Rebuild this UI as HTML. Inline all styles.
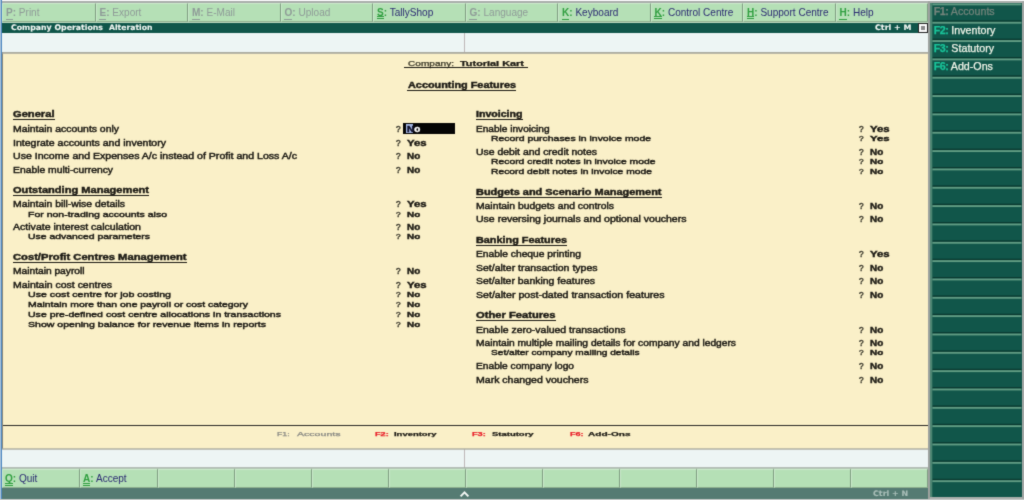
<!DOCTYPE html>
<html lang="en">
<head>
<meta charset="utf-8">
<title>Tally - Accounting Features</title>
<style>
html,body{margin:0;padding:0;}
body{width:1024px;height:500px;overflow:hidden;background:#d6dad8;font-family:"Liberation Sans",Arial,sans-serif;}
#app{filter:url(#soft);position:relative;width:1024px;height:500px;overflow:hidden;background:#a9aeab;}
#app div,#app span,#app i,#app b{box-sizing:border-box;}
.edge-top{position:absolute;left:0;top:0;width:1024px;height:1.3px;background:#fbfbfb;}
.edge-left-a{position:absolute;left:0;top:0;width:1px;height:500px;background:#a9c3da;}
.edge-left-b{position:absolute;left:1px;top:0;width:1.2px;height:500px;background:#4b86c0;}
.edge-bot{position:absolute;left:0;top:498.6px;width:1024px;height:1.4px;background:#c9cdcb;}
.edge-right{position:absolute;left:1021.7px;top:1.3px;width:2.3px;height:498px;background:#a4a8a6;}
/* top toolbar */
#tbar{position:absolute;left:2.4px;top:2.5px;width:926.1px;height:19.4px;display:flex;background:#7f9d82;}
#bbar{position:absolute;left:2.4px;top:468px;width:926.1px;height:20px;display:flex;background:#7f9d82;}
.btn{position:relative;flex:0 0 auto;height:100%;background:#b5e0b6;border-left:1.5px solid #cbeacb;border-top:1.4px solid #cbeacb;border-right:1.1px solid #7f9d82;border-bottom:1.1px solid #8fb08f;white-space:nowrap;overflow:hidden;}
.btn .lbl{position:absolute;left:2.6px;top:3.9px;font-size:10.05px;line-height:12px;color:#2b2a72;transform-origin:0 50%;}
.btn.off .lbl{color:#8e9a97;}
.btn .k{position:relative;display:inline-block;font-weight:bold;color:#2f9e3f;}
.btn.off .k{color:#8e9a97;}
.btn .c{color:#2f9e3f;font-weight:bold;}
.btn.off .c{color:#8e9a97;}
.btn .k:after{content:"";position:absolute;left:0;right:0;top:11.3px;height:1.1px;background:#2f9e3f;}
.btn.dbl .k:after{top:9.1px;height:3px;box-sizing:border-box;background:none;border-top:1px solid #2f9e3f;border-bottom:1px solid #2f9e3f;}
.btn.off .k:after{background:#8e9a97;}
#bbar .lbl{left:1.6px;font-size:10.05px;}
#tbar .btn{width:92.51px;}
#tbar .btn.first{width:93.51px;}
#bbar .btn{width:77.09px;}
#bbar .btn.first{width:78.09px;}
#bbar .btn{border-top-width:2px;}
#bbar .lbl{top:3.2px;}
#bbar .btn.dbl .k:after{top:10.1px;}
/* title bar */
#tline{position:absolute;left:2.4px;top:21.9px;width:925.7px;height:1px;background:#bcd8bd;}
#title{position:absolute;left:2.4px;top:22.8px;width:925.7px;height:10.1px;background:#10564a;}
#xbox{position:absolute;left:918px;top:23.2px;width:10.1px;height:9.6px;background:#fbfbfb;border:1px solid #222;}
#xbox i{position:absolute;left:2.2px;top:2.2px;width:3.8px;height:3.2px;background:#8a8a8a;}
/* light strips */
.strip{position:absolute;left:2.4px;width:925.7px;background:#edf5f4;}
#s1{top:32.9px;height:20.1px;}
#s2{top:449px;height:19px;}
.vline{position:absolute;left:461.8px;top:0;width:1px;height:100%;background:#beb7b7;}
.hline{position:absolute;left:2.4px;width:925.7px;height:1.1px;background:#a3a5a0;}
/* main yellow */
#main{position:absolute;left:2.4px;top:52px;width:925.7px;height:398px;background:#faf0c8;border-left:1.3px solid #8a8678;}
#sep{position:absolute;left:3.4px;top:424.6px;width:924.7px;height:1.3px;background:#2a2a26;}
/* bottom status */
#status{position:absolute;left:2.4px;top:488px;width:925.7px;height:10.6px;background:#557b73;}
/* right panel */
#gap{position:absolute;left:928.1px;top:1.3px;width:2.3px;height:497.3px;background:#9ea29f;}
#side{position:absolute;left:930.3px;top:2.6px;width:91.3px;height:494.6px;background:#11564a;overflow:hidden;}
#sidebg{position:absolute;left:0;top:0;display:block;}
.sb{position:absolute;left:2.3px;width:89px;height:18.34px;}
.sb span{position:absolute;left:1.1px;top:0;font-size:10.7px;line-height:12px;white-space:nowrap;color:#f3f6ea;transform-origin:0 50%;-webkit-text-stroke:0.25px currentColor;}
.sb b{color:#19c49a;font-weight:bold;letter-spacing:-0.45px;}
.sb.off span,.sb.off b{color:#74857c;}
/* content text */
#content{position:absolute;left:0;top:0;width:1024px;height:500px;}
.t{position:absolute;display:block;white-space:nowrap;line-height:12px;transform-origin:0 50%;font-family:"Liberation Sans",Arial,sans-serif;}

.t{-webkit-text-stroke:0.45px currentColor;}
.t.sub{-webkit-text-stroke:0.42px currentColor;}
.t.tiny{-webkit-text-stroke:0.25px currentColor;}
.t.dv{font-family:"DejaVu Sans","Liberation Sans",sans-serif;-webkit-text-stroke:0.12px currentColor;}
.ul{position:absolute;display:block;height:1.1px;background:#1c1a14;}
#field{position:absolute;left:403.4px;top:122.9px;width:51.9px;height:10.8px;background:#050505;}
#cur{position:absolute;left:405.6px;top:124.2px;width:7.6px;height:8.8px;background:#a4b6e2;}
.cn{color:#0c0c24;}
#caret{position:absolute;left:458.2px;top:488.7px;width:13px;height:9px;}

</style>
</head>
<body>
<svg width="0" height="0" style="position:absolute"><defs><filter id="soft" x="0" y="0" width="100%" height="100%" color-interpolation-filters="sRGB"><feConvolveMatrix order="3" kernelMatrix="0.02 0.09 0.02 0.09 0.56 0.09 0.02 0.09 0.02" edgeMode="duplicate" preserveAlpha="true"/></filter></defs></svg>
<div id="app">
<div class="edge-top"></div><div class="edge-left-a"></div><div class="edge-left-b"></div><div class="edge-bot"></div><div class="edge-right"></div>
<div id="tbar">
<div class="btn off first"><span class="lbl"><span class="k">P</span><span class="c">:</span> Print</span></div>
<div class="btn off"><span class="lbl"><span class="k">E</span><span class="c">:</span> Export</span></div>
<div class="btn off"><span class="lbl"><span class="k">M</span><span class="c">:</span> E-Mail</span></div>
<div class="btn off"><span class="lbl"><span class="k">O</span><span class="c">:</span> Upload</span></div>
<div class="btn dbl"><span class="lbl"><span class="k">S</span><span class="c">:</span> TallyShop</span></div>
<div class="btn off"><span class="lbl"><span class="k">G</span><span class="c">:</span> Language</span></div>
<div class="btn"><span class="lbl"><span class="k">K</span><span class="c">:</span> Keyboard</span></div>
<div class="btn dbl"><span class="lbl"><span class="k">K</span><span class="c">:</span> Control Centre</span></div>
<div class="btn dbl"><span class="lbl"><span class="k">H</span><span class="c">:</span> Support Centre</span></div>
<div class="btn"><span class="lbl"><span class="k">H</span><span class="c">:</span> Help</span></div>
</div>
<div id="tline"></div>
<div id="title"></div>
<div id="xbox"><i></i></div>
<div class="strip" id="s1"><div class="vline"></div></div>
<div id="main"></div>
<div id="sep"></div>
<div class="strip" id="s2"><div class="vline"></div></div>
<div id="bbar">
<div class="btn dbl first"><span class="lbl"><span class="k">Q</span><span class="c">:</span> Quit</span></div>
<div class="btn dbl"><span class="lbl"><span class="k">A</span><span class="c">:</span> Accept</span></div>
<div class="btn"></div><div class="btn"></div><div class="btn"></div><div class="btn"></div><div class="btn"></div>
<div class="btn"></div><div class="btn"></div><div class="btn"></div><div class="btn"></div><div class="btn"></div>
</div>
<div id="status"></div>
<div class="hline" style="top:52px;height:1px;background:#9c9e98;opacity:0.86"></div><div class="hline" style="top:53px;height:1px;background:#9c9e98;opacity:0.69"></div><div class="hline" style="top:448px;height:1px;background:#a8a89c;opacity:0.69"></div><div class="hline" style="top:449px;height:1px;background:#a8a89c;opacity:0.69"></div><div class="hline" style="top:467px;height:1px;background:#a0a8a1;opacity:0.75"></div><div class="hline" style="top:468px;height:1px;background:#a0a8a1;opacity:0.55"></div>
<svg id="caret" viewBox="0 0 13 9"><path d="M2.6 7.4 L6.5 3.3 L10.4 7.4" fill="none" stroke="#f6f8f6" stroke-width="1.9"/></svg>
<div id="gap"></div>
<div id="side">
<svg id="sidebg" width="91.4" height="495.8" viewBox="0 0 91.4 495.8">
<rect x="0" y="0" width="91.4" height="495.8" fill="#11564a"/>
<rect x="2.3" y="0.40" width="89.1" height="1.9" fill="#629d84"/><rect x="2.3" y="17.34" width="89.1" height="1.5" fill="#08372e"/>
<rect x="2.3" y="18.74" width="89.1" height="1.9" fill="#629d84"/><rect x="2.3" y="35.68" width="89.1" height="1.5" fill="#08372e"/>
<rect x="2.3" y="37.08" width="89.1" height="1.9" fill="#629d84"/><rect x="2.3" y="54.02" width="89.1" height="1.5" fill="#08372e"/>
<rect x="2.3" y="55.42" width="89.1" height="1.9" fill="#629d84"/><rect x="2.3" y="72.36" width="89.1" height="1.5" fill="#08372e"/>
<rect x="2.3" y="73.76" width="89.1" height="1.9" fill="#629d84"/><rect x="2.3" y="90.70" width="89.1" height="1.5" fill="#08372e"/>
<rect x="2.3" y="92.10" width="89.1" height="1.9" fill="#629d84"/><rect x="2.3" y="109.04" width="89.1" height="1.5" fill="#08372e"/>
<rect x="2.3" y="110.44" width="89.1" height="1.9" fill="#629d84"/><rect x="2.3" y="127.38" width="89.1" height="1.5" fill="#08372e"/>
<rect x="2.3" y="128.78" width="89.1" height="1.9" fill="#629d84"/><rect x="2.3" y="145.72" width="89.1" height="1.5" fill="#08372e"/>
<rect x="2.3" y="147.12" width="89.1" height="1.9" fill="#629d84"/><rect x="2.3" y="164.06" width="89.1" height="1.5" fill="#08372e"/>
<rect x="2.3" y="165.46" width="89.1" height="1.9" fill="#629d84"/><rect x="2.3" y="182.40" width="89.1" height="1.5" fill="#08372e"/>
<rect x="2.3" y="183.80" width="89.1" height="1.9" fill="#629d84"/><rect x="2.3" y="200.74" width="89.1" height="1.5" fill="#08372e"/>
<rect x="2.3" y="202.14" width="89.1" height="1.9" fill="#629d84"/><rect x="2.3" y="219.08" width="89.1" height="1.5" fill="#08372e"/>
<rect x="2.3" y="220.48" width="89.1" height="1.9" fill="#629d84"/><rect x="2.3" y="237.42" width="89.1" height="1.5" fill="#08372e"/>
<rect x="2.3" y="238.82" width="89.1" height="1.9" fill="#629d84"/><rect x="2.3" y="255.76" width="89.1" height="1.5" fill="#08372e"/>
<rect x="2.3" y="257.16" width="89.1" height="1.9" fill="#629d84"/><rect x="2.3" y="274.10" width="89.1" height="1.5" fill="#08372e"/>
<rect x="2.3" y="275.50" width="89.1" height="1.9" fill="#629d84"/><rect x="2.3" y="292.44" width="89.1" height="1.5" fill="#08372e"/>
<rect x="2.3" y="293.84" width="89.1" height="1.9" fill="#629d84"/><rect x="2.3" y="310.78" width="89.1" height="1.5" fill="#08372e"/>
<rect x="2.3" y="312.18" width="89.1" height="1.9" fill="#629d84"/><rect x="2.3" y="329.12" width="89.1" height="1.5" fill="#08372e"/>
<rect x="2.3" y="330.52" width="89.1" height="1.9" fill="#629d84"/><rect x="2.3" y="347.46" width="89.1" height="1.5" fill="#08372e"/>
<rect x="2.3" y="348.86" width="89.1" height="1.9" fill="#629d84"/><rect x="2.3" y="365.80" width="89.1" height="1.5" fill="#08372e"/>
<rect x="2.3" y="367.20" width="89.1" height="1.9" fill="#629d84"/><rect x="2.3" y="384.14" width="89.1" height="1.5" fill="#08372e"/>
<rect x="2.3" y="385.54" width="89.1" height="1.9" fill="#629d84"/><rect x="2.3" y="402.48" width="89.1" height="1.5" fill="#08372e"/>
<rect x="2.3" y="403.88" width="89.1" height="1.9" fill="#629d84"/><rect x="2.3" y="420.82" width="89.1" height="1.5" fill="#08372e"/>
<rect x="2.3" y="422.22" width="89.1" height="1.9" fill="#629d84"/><rect x="2.3" y="439.16" width="89.1" height="1.5" fill="#08372e"/>
<rect x="2.3" y="440.56" width="89.1" height="1.9" fill="#629d84"/><rect x="2.3" y="457.50" width="89.1" height="1.5" fill="#08372e"/>
<rect x="2.3" y="458.90" width="89.1" height="1.9" fill="#629d84"/><rect x="2.3" y="475.84" width="89.1" height="1.5" fill="#08372e"/>
<rect x="2.3" y="477.24" width="89.1" height="1.9" fill="#629d84"/><rect x="2.3" y="494.18" width="89.1" height="1.5" fill="#08372e"/>
<rect x="0" y="0" width="2.3" height="495.8" fill="#4d8572"/>
</svg>
<div class="sb off" style="top:2.56px"><span><b>F1:</b> Accounts</span></div>
<div class="sb" style="top:20.96px"><span><b>F2:</b> Inventory</span></div>
<div class="sb" style="top:39.36px"><span><b>F3:</b> Statutory</span></div>
<div class="sb" style="top:57.76px"><span><b>F6:</b> Add-Ons</span></div>
</div>
<div id="field"></div><div id="cur"></div>

<div id="content">
<span class="t" style="left:13.00px;top:108.21px;font-size:9.20px;color:#1c1a14;font-weight:bold;transform:scaleX(1.2128);">General</span>
<i class="ul" style="left:12.70px;top:119.00px;width:42.30px"></i>
<span class="t" style="left:13.00px;top:123.03px;font-size:9.00px;color:#1c1a14;transform:scaleX(1.1577);">Maintain accounts only</span>
<span class="t" style="left:396.20px;top:123.03px;font-size:9.00px;color:#3a382c;transform:scaleX(0.9171);">?</span>
<span class="t" style="left:406.50px;top:123.03px;font-size:9.00px;color:#ffffff;font-weight:bold;transform:scaleX(1.1000);"><span class="cn">N</span>o</span>
<span class="t" style="left:13.00px;top:136.78px;font-size:9.00px;color:#1c1a14;transform:scaleX(1.1716);">Integrate accounts and inventory</span>
<span class="t" style="left:396.20px;top:136.78px;font-size:9.00px;color:#3a382c;transform:scaleX(0.9171);">?</span>
<span class="t" style="left:406.50px;top:136.78px;font-size:9.00px;color:#1c1a14;font-weight:bold;transform:scaleX(1.2555);">Yes</span>
<span class="t" style="left:13.00px;top:150.28px;font-size:9.00px;color:#1c1a14;transform:scaleX(1.1753);">Use Income and Expenses A/c instead of Profit and Loss A/c</span>
<span class="t" style="left:396.20px;top:150.28px;font-size:9.00px;color:#3a382c;transform:scaleX(0.9171);">?</span>
<span class="t" style="left:406.50px;top:150.28px;font-size:9.00px;color:#1c1a14;font-weight:bold;transform:scaleX(1.1000);">No</span>
<span class="t" style="left:13.00px;top:163.78px;font-size:9.00px;color:#1c1a14;transform:scaleX(1.1488);">Enable multi-currency</span>
<span class="t" style="left:396.20px;top:163.78px;font-size:9.00px;color:#3a382c;transform:scaleX(0.9171);">?</span>
<span class="t" style="left:406.50px;top:163.78px;font-size:9.00px;color:#1c1a14;font-weight:bold;transform:scaleX(1.1000);">No</span>
<span class="t" style="left:13.00px;top:183.71px;font-size:9.20px;color:#1c1a14;font-weight:bold;transform:scaleX(1.2055);">Outstanding Management</span>
<i class="ul" style="left:12.70px;top:194.50px;width:136.80px"></i>
<span class="t" style="left:13.00px;top:198.28px;font-size:9.00px;color:#1c1a14;transform:scaleX(1.1541);">Maintain bill-wise details</span>
<span class="t" style="left:396.20px;top:198.28px;font-size:9.00px;color:#3a382c;transform:scaleX(0.9171);">?</span>
<span class="t" style="left:406.50px;top:198.28px;font-size:9.00px;color:#1c1a14;font-weight:bold;transform:scaleX(1.2555);">Yes</span>
<span class="t sub" style="left:28.00px;top:208.80px;font-size:7.50px;color:#1c1a14;transform:scaleX(1.4007);">For non-trading accounts also</span>
<span class="t sub" style="left:396.20px;top:208.80px;font-size:7.50px;color:#3a382c;transform:scaleX(1.1026);">?</span>
<span class="t sub" style="left:406.50px;top:208.80px;font-size:7.50px;color:#1c1a14;font-weight:bold;transform:scaleX(1.3200);">No</span>
<span class="t" style="left:13.00px;top:221.28px;font-size:9.00px;color:#1c1a14;transform:scaleX(1.1736);">Activate interest calculation</span>
<span class="t" style="left:396.20px;top:221.28px;font-size:9.00px;color:#3a382c;transform:scaleX(0.9171);">?</span>
<span class="t" style="left:406.50px;top:221.28px;font-size:9.00px;color:#1c1a14;font-weight:bold;transform:scaleX(1.1000);">No</span>
<span class="t sub" style="left:28.00px;top:231.30px;font-size:7.50px;color:#1c1a14;transform:scaleX(1.3869);">Use advanced parameters</span>
<span class="t sub" style="left:396.20px;top:231.30px;font-size:7.50px;color:#3a382c;transform:scaleX(1.1026);">?</span>
<span class="t sub" style="left:406.50px;top:231.30px;font-size:7.50px;color:#1c1a14;font-weight:bold;transform:scaleX(1.3200);">No</span>
<span class="t" style="left:13.00px;top:251.21px;font-size:9.20px;color:#1c1a14;font-weight:bold;transform:scaleX(1.2181);">Cost/Profit Centres Management</span>
<i class="ul" style="left:12.70px;top:262.00px;width:174.30px"></i>
<span class="t" style="left:13.00px;top:265.28px;font-size:9.00px;color:#1c1a14;transform:scaleX(1.1344);">Maintain payroll</span>
<span class="t" style="left:396.20px;top:265.28px;font-size:9.00px;color:#3a382c;transform:scaleX(0.9171);">?</span>
<span class="t" style="left:406.50px;top:265.28px;font-size:9.00px;color:#1c1a14;font-weight:bold;transform:scaleX(1.1000);">No</span>
<span class="t" style="left:13.00px;top:278.78px;font-size:9.00px;color:#1c1a14;transform:scaleX(1.1641);">Maintain cost centres</span>
<span class="t" style="left:396.20px;top:278.78px;font-size:9.00px;color:#3a382c;transform:scaleX(0.9171);">?</span>
<span class="t" style="left:406.50px;top:278.78px;font-size:9.00px;color:#1c1a14;font-weight:bold;transform:scaleX(1.2555);">Yes</span>
<span class="t sub" style="left:28.00px;top:289.30px;font-size:7.50px;color:#1c1a14;transform:scaleX(1.4174);">Use cost centre for job costing</span>
<span class="t sub" style="left:396.20px;top:289.30px;font-size:7.50px;color:#3a382c;transform:scaleX(1.1026);">?</span>
<span class="t sub" style="left:406.50px;top:289.30px;font-size:7.50px;color:#1c1a14;font-weight:bold;transform:scaleX(1.3200);">No</span>
<span class="t sub" style="left:28.00px;top:299.30px;font-size:7.50px;color:#1c1a14;transform:scaleX(1.3887);">Maintain more than one payroll or cost category</span>
<span class="t sub" style="left:396.20px;top:299.30px;font-size:7.50px;color:#3a382c;transform:scaleX(1.1026);">?</span>
<span class="t sub" style="left:406.50px;top:299.30px;font-size:7.50px;color:#1c1a14;font-weight:bold;transform:scaleX(1.3200);">No</span>
<span class="t sub" style="left:28.00px;top:308.55px;font-size:7.50px;color:#1c1a14;transform:scaleX(1.4047);">Use pre-defined cost centre allocations in transactions</span>
<span class="t sub" style="left:396.20px;top:308.55px;font-size:7.50px;color:#3a382c;transform:scaleX(1.1026);">?</span>
<span class="t sub" style="left:406.50px;top:308.55px;font-size:7.50px;color:#1c1a14;font-weight:bold;transform:scaleX(1.3200);">No</span>
<span class="t sub" style="left:28.00px;top:318.55px;font-size:7.50px;color:#1c1a14;transform:scaleX(1.4059);">Show opening balance for revenue items in reports</span>
<span class="t sub" style="left:396.20px;top:318.55px;font-size:7.50px;color:#3a382c;transform:scaleX(1.1026);">?</span>
<span class="t sub" style="left:406.50px;top:318.55px;font-size:7.50px;color:#1c1a14;font-weight:bold;transform:scaleX(1.3200);">No</span>
<span class="t" style="left:476.00px;top:108.21px;font-size:9.20px;color:#1c1a14;font-weight:bold;transform:scaleX(1.1530);">Invoicing</span>
<i class="ul" style="left:475.70px;top:119.00px;width:47.30px"></i>
<span class="t" style="left:476.00px;top:123.03px;font-size:9.00px;color:#1c1a14;transform:scaleX(1.1213);">Enable invoicing</span>
<span class="t" style="left:859.30px;top:123.03px;font-size:9.00px;color:#3a382c;transform:scaleX(0.9171);">?</span>
<span class="t" style="left:870.30px;top:123.03px;font-size:9.00px;color:#1c1a14;font-weight:bold;transform:scaleX(1.2555);">Yes</span>
<span class="t sub" style="left:491.00px;top:133.05px;font-size:7.50px;color:#1c1a14;transform:scaleX(1.3905);">Record purchases in invoice mode</span>
<span class="t sub" style="left:859.30px;top:133.05px;font-size:7.50px;color:#3a382c;transform:scaleX(1.1026);">?</span>
<span class="t sub" style="left:870.30px;top:133.05px;font-size:7.50px;color:#1c1a14;font-weight:bold;transform:scaleX(1.5072);">Yes</span>
<span class="t" style="left:476.00px;top:145.78px;font-size:9.00px;color:#1c1a14;transform:scaleX(1.1570);">Use debit and credit notes</span>
<span class="t" style="left:859.30px;top:145.78px;font-size:9.00px;color:#3a382c;transform:scaleX(0.9171);">?</span>
<span class="t" style="left:870.30px;top:145.78px;font-size:9.00px;color:#1c1a14;font-weight:bold;transform:scaleX(1.1000);">No</span>
<span class="t sub" style="left:491.00px;top:156.05px;font-size:7.50px;color:#1c1a14;transform:scaleX(1.3796);">Record credit notes in invoice mode</span>
<span class="t sub" style="left:859.30px;top:156.05px;font-size:7.50px;color:#3a382c;transform:scaleX(1.1026);">?</span>
<span class="t sub" style="left:870.30px;top:156.05px;font-size:7.50px;color:#1c1a14;font-weight:bold;transform:scaleX(1.3200);">No</span>
<span class="t sub" style="left:491.00px;top:166.05px;font-size:7.50px;color:#1c1a14;transform:scaleX(1.3742);">Record debit notes in invoice mode</span>
<span class="t sub" style="left:859.30px;top:166.05px;font-size:7.50px;color:#3a382c;transform:scaleX(1.1026);">?</span>
<span class="t sub" style="left:870.30px;top:166.05px;font-size:7.50px;color:#1c1a14;font-weight:bold;transform:scaleX(1.3200);">No</span>
<span class="t" style="left:476.00px;top:185.71px;font-size:9.20px;color:#1c1a14;font-weight:bold;transform:scaleX(1.1913);">Budgets and Scenario Management</span>
<i class="ul" style="left:475.70px;top:196.50px;width:186.30px"></i>
<span class="t" style="left:476.00px;top:200.03px;font-size:9.00px;color:#1c1a14;transform:scaleX(1.1493);">Maintain budgets and controls</span>
<span class="t" style="left:859.30px;top:200.03px;font-size:9.00px;color:#3a382c;transform:scaleX(0.9171);">?</span>
<span class="t" style="left:870.30px;top:200.03px;font-size:9.00px;color:#1c1a14;font-weight:bold;transform:scaleX(1.1000);">No</span>
<span class="t" style="left:476.00px;top:213.28px;font-size:9.00px;color:#1c1a14;transform:scaleX(1.1687);">Use reversing journals and optional vouchers</span>
<span class="t" style="left:859.30px;top:213.28px;font-size:9.00px;color:#3a382c;transform:scaleX(0.9171);">?</span>
<span class="t" style="left:870.30px;top:213.28px;font-size:9.00px;color:#1c1a14;font-weight:bold;transform:scaleX(1.1000);">No</span>
<span class="t" style="left:476.00px;top:234.21px;font-size:9.20px;color:#1c1a14;font-weight:bold;transform:scaleX(1.1804);">Banking Features</span>
<i class="ul" style="left:475.70px;top:245.00px;width:91.80px"></i>
<span class="t" style="left:476.00px;top:248.28px;font-size:9.00px;color:#1c1a14;transform:scaleX(1.1403);">Enable cheque printing</span>
<span class="t" style="left:859.30px;top:248.28px;font-size:9.00px;color:#3a382c;transform:scaleX(0.9171);">?</span>
<span class="t" style="left:870.30px;top:248.28px;font-size:9.00px;color:#1c1a14;font-weight:bold;transform:scaleX(1.2555);">Yes</span>
<span class="t" style="left:476.00px;top:261.78px;font-size:9.00px;color:#1c1a14;transform:scaleX(1.1676);">Set/alter transaction types</span>
<span class="t" style="left:859.30px;top:261.78px;font-size:9.00px;color:#3a382c;transform:scaleX(0.9171);">?</span>
<span class="t" style="left:870.30px;top:261.78px;font-size:9.00px;color:#1c1a14;font-weight:bold;transform:scaleX(1.1000);">No</span>
<span class="t" style="left:476.00px;top:275.28px;font-size:9.00px;color:#1c1a14;transform:scaleX(1.1601);">Set/alter banking features</span>
<span class="t" style="left:859.30px;top:275.28px;font-size:9.00px;color:#3a382c;transform:scaleX(0.9171);">?</span>
<span class="t" style="left:870.30px;top:275.28px;font-size:9.00px;color:#1c1a14;font-weight:bold;transform:scaleX(1.1000);">No</span>
<span class="t" style="left:476.00px;top:288.78px;font-size:9.00px;color:#1c1a14;transform:scaleX(1.1774);">Set/alter post-dated transaction features</span>
<span class="t" style="left:859.30px;top:288.78px;font-size:9.00px;color:#3a382c;transform:scaleX(0.9171);">?</span>
<span class="t" style="left:870.30px;top:288.78px;font-size:9.00px;color:#1c1a14;font-weight:bold;transform:scaleX(1.1000);">No</span>
<span class="t" style="left:476.00px;top:309.21px;font-size:9.20px;color:#1c1a14;font-weight:bold;transform:scaleX(1.2164);">Other Features</span>
<i class="ul" style="left:475.70px;top:320.00px;width:80.30px"></i>
<span class="t" style="left:476.00px;top:323.78px;font-size:9.00px;color:#1c1a14;transform:scaleX(1.1627);">Enable zero-valued transactions</span>
<span class="t" style="left:859.30px;top:323.78px;font-size:9.00px;color:#3a382c;transform:scaleX(0.9171);">?</span>
<span class="t" style="left:870.30px;top:323.78px;font-size:9.00px;color:#1c1a14;font-weight:bold;transform:scaleX(1.1000);">No</span>
<span class="t" style="left:476.00px;top:337.28px;font-size:9.00px;color:#1c1a14;transform:scaleX(1.1372);">Maintain multiple mailing details for company and ledgers</span>
<span class="t" style="left:859.30px;top:337.28px;font-size:9.00px;color:#3a382c;transform:scaleX(0.9171);">?</span>
<span class="t" style="left:870.30px;top:337.28px;font-size:9.00px;color:#1c1a14;font-weight:bold;transform:scaleX(1.1000);">No</span>
<span class="t sub" style="left:491.00px;top:347.30px;font-size:7.50px;color:#1c1a14;transform:scaleX(1.3492);">Set/alter company mailing details</span>
<span class="t sub" style="left:859.30px;top:347.30px;font-size:7.50px;color:#3a382c;transform:scaleX(1.1026);">?</span>
<span class="t sub" style="left:870.30px;top:347.30px;font-size:7.50px;color:#1c1a14;font-weight:bold;transform:scaleX(1.3200);">No</span>
<span class="t" style="left:476.00px;top:360.28px;font-size:9.00px;color:#1c1a14;transform:scaleX(1.1321);">Enable company logo</span>
<span class="t" style="left:859.30px;top:360.28px;font-size:9.00px;color:#3a382c;transform:scaleX(0.9171);">?</span>
<span class="t" style="left:870.30px;top:360.28px;font-size:9.00px;color:#1c1a14;font-weight:bold;transform:scaleX(1.1000);">No</span>
<span class="t" style="left:476.00px;top:373.78px;font-size:9.00px;color:#1c1a14;transform:scaleX(1.1711);">Mark changed vouchers</span>
<span class="t" style="left:859.30px;top:373.78px;font-size:9.00px;color:#3a382c;transform:scaleX(0.9171);">?</span>
<span class="t" style="left:870.30px;top:373.78px;font-size:9.00px;color:#1c1a14;font-weight:bold;transform:scaleX(1.1000);">No</span>
<span class="t tiny" style="left:407.50px;top:57.78px;font-size:6.40px;color:#3a3828;transform:scaleX(1.5786);">Company:</span>
<span class="t tiny" style="left:460.00px;top:57.78px;font-size:6.40px;color:#1c1a14;font-weight:bold;transform:scaleX(1.7052);">Tutorial Kart</span>
<span class="t" style="left:407.50px;top:78.81px;font-size:9.20px;color:#1c1a14;font-weight:bold;transform:scaleX(1.1817);">Accounting Features</span>
<i class="ul" style="left:407.20px;top:89.60px;width:108.80px"></i>
<span class="t tiny" style="left:277.30px;top:427.52px;font-size:6.00px;color:#8a8a84;transform:scaleX(1.4645);">F1:</span>
<span class="t tiny" style="left:297.30px;top:427.52px;font-size:6.00px;color:#8a8a84;transform:scaleX(1.7620);">Accounts</span>
<span class="t tiny" style="left:375.00px;top:427.52px;font-size:6.00px;color:#e8202a;font-weight:bold;transform:scaleX(1.5222);">F2:</span>
<span class="t tiny" style="left:394.00px;top:427.52px;font-size:6.00px;color:#1c1a14;font-weight:bold;transform:scaleX(1.5732);">Inventory</span>
<span class="t tiny" style="left:472.30px;top:427.52px;font-size:6.00px;color:#e8202a;font-weight:bold;transform:scaleX(1.5222);">F3:</span>
<span class="t tiny" style="left:491.80px;top:427.52px;font-size:6.00px;color:#1c1a14;font-weight:bold;transform:scaleX(1.5791);">Statutory</span>
<span class="t tiny" style="left:569.50px;top:427.52px;font-size:6.00px;color:#e8202a;font-weight:bold;transform:scaleX(1.5000);">F6:</span>
<span class="t tiny" style="left:588.00px;top:427.52px;font-size:6.00px;color:#1c1a14;font-weight:bold;transform:scaleX(1.6769);">Add-Ons</span>
<span class="t dv sub" style="left:10.50px;top:22.37px;font-size:7.60px;color:#f4f8f4;font-weight:bold;transform:scaleX(1.0272);">Company Operations</span>
<span class="t dv sub" style="left:108.80px;top:22.37px;font-size:7.60px;color:#f4f8f4;font-weight:bold;transform:scaleX(1.0116);">Alteration</span>
<span class="t dv sub" style="left:874.50px;top:22.37px;font-size:7.60px;color:#f4f8f4;font-weight:bold;transform:scaleX(1.0499);">Ctrl + M</span>
<span class="t dv sub" style="left:872.80px;top:488.37px;font-size:7.60px;color:#a9beb8;font-weight:bold;transform:scaleX(1.0488);">Ctrl + N</span>
<i class="ul" style="left:404px;top:66.8px;width:123.5px"></i>
</div>
</div>
</body>
</html>
